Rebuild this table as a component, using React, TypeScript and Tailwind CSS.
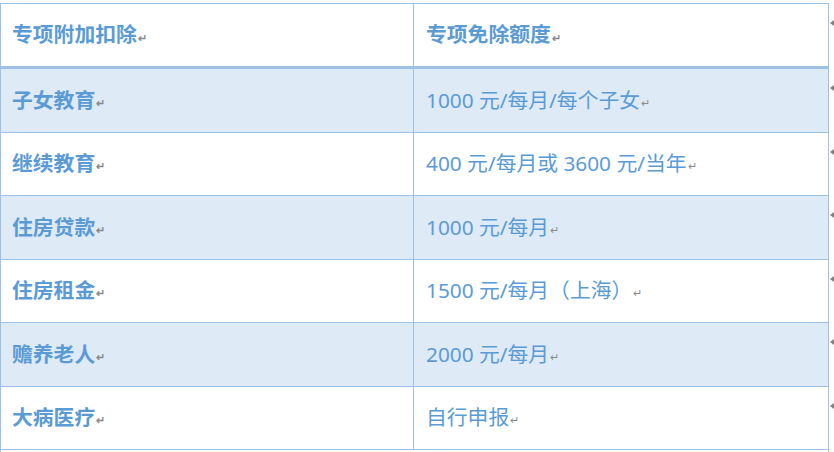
import React from 'react';

const rows = [
  { name: '子女教育', amount: '1000 元/每月/每个子女', shaded: true },
  { name: '继续教育', amount: '400 元/每月或 3600 元/当年', shaded: false },
  { name: '住房贷款', amount: '1000 元/每月', shaded: true },
  { name: '住房租金', amount: '1500 元/每月（上海）', shaded: false },
  { name: '赡养老人', amount: '2000 元/每月', shaded: true },
  { name: '大病医疗', amount: '自行申报', shaded: false },
];

const font = { fontFamily: '"Noto Sans", "Noto Sans CJK SC", sans-serif' };

const Mark = () => (
  <span className="ml-[1px] text-[11px] leading-none text-[#8a8a8a] relative top-[2px]">↵</span>
);

const EndMark = () => (
  <div className="w-0 h-0 border-y-[3px] border-y-transparent border-r-[4px] border-r-[#7f7f7f]" />
);

const App: React.FC = () => {
  return (
    <div className="w-[834px] h-[452px] bg-white pt-[3px] flex" style={font}>
      <div className="w-[830px] border-x border-t border-[#9cc3e5] text-[20.8px] text-[#5b9bd5]">
        <div className="flex h-[65px] border-b-[3px] border-[#9cc3e5] bg-white">
          <div className="w-[413px] border-r border-[#9cc3e5] flex items-center pl-[11px] font-bold">
            专项附加扣除<Mark />
          </div>
          <div className="flex-1 flex items-center pl-[12px] font-bold">
            专项免除额度<Mark />
          </div>
        </div>
        {rows.map((r) => (
          <div
            key={r.name}
            className={`flex h-[63.5px] border-b border-[#9cc3e5] ${r.shaded ? 'bg-[#deeaf6]' : 'bg-white'}`}
          >
            <div className="w-[413px] border-r border-[#9cc3e5] flex items-center pl-[11px] font-bold">
              {r.name}<Mark />
            </div>
            <div className="flex-1 flex items-center pl-[12px]">
              {r.amount}<Mark />
            </div>
          </div>
        ))}
      </div>
      <div className="flex flex-col pl-[1px]">
        <div className="h-[66px] pt-[17px]">
          <EndMark />
        </div>
        {rows.map((r) => (
          <div key={r.name} className="h-[63.5px] pt-[16px]">
            <EndMark />
          </div>
        ))}
      </div>
    </div>
  );
};

export default App;
